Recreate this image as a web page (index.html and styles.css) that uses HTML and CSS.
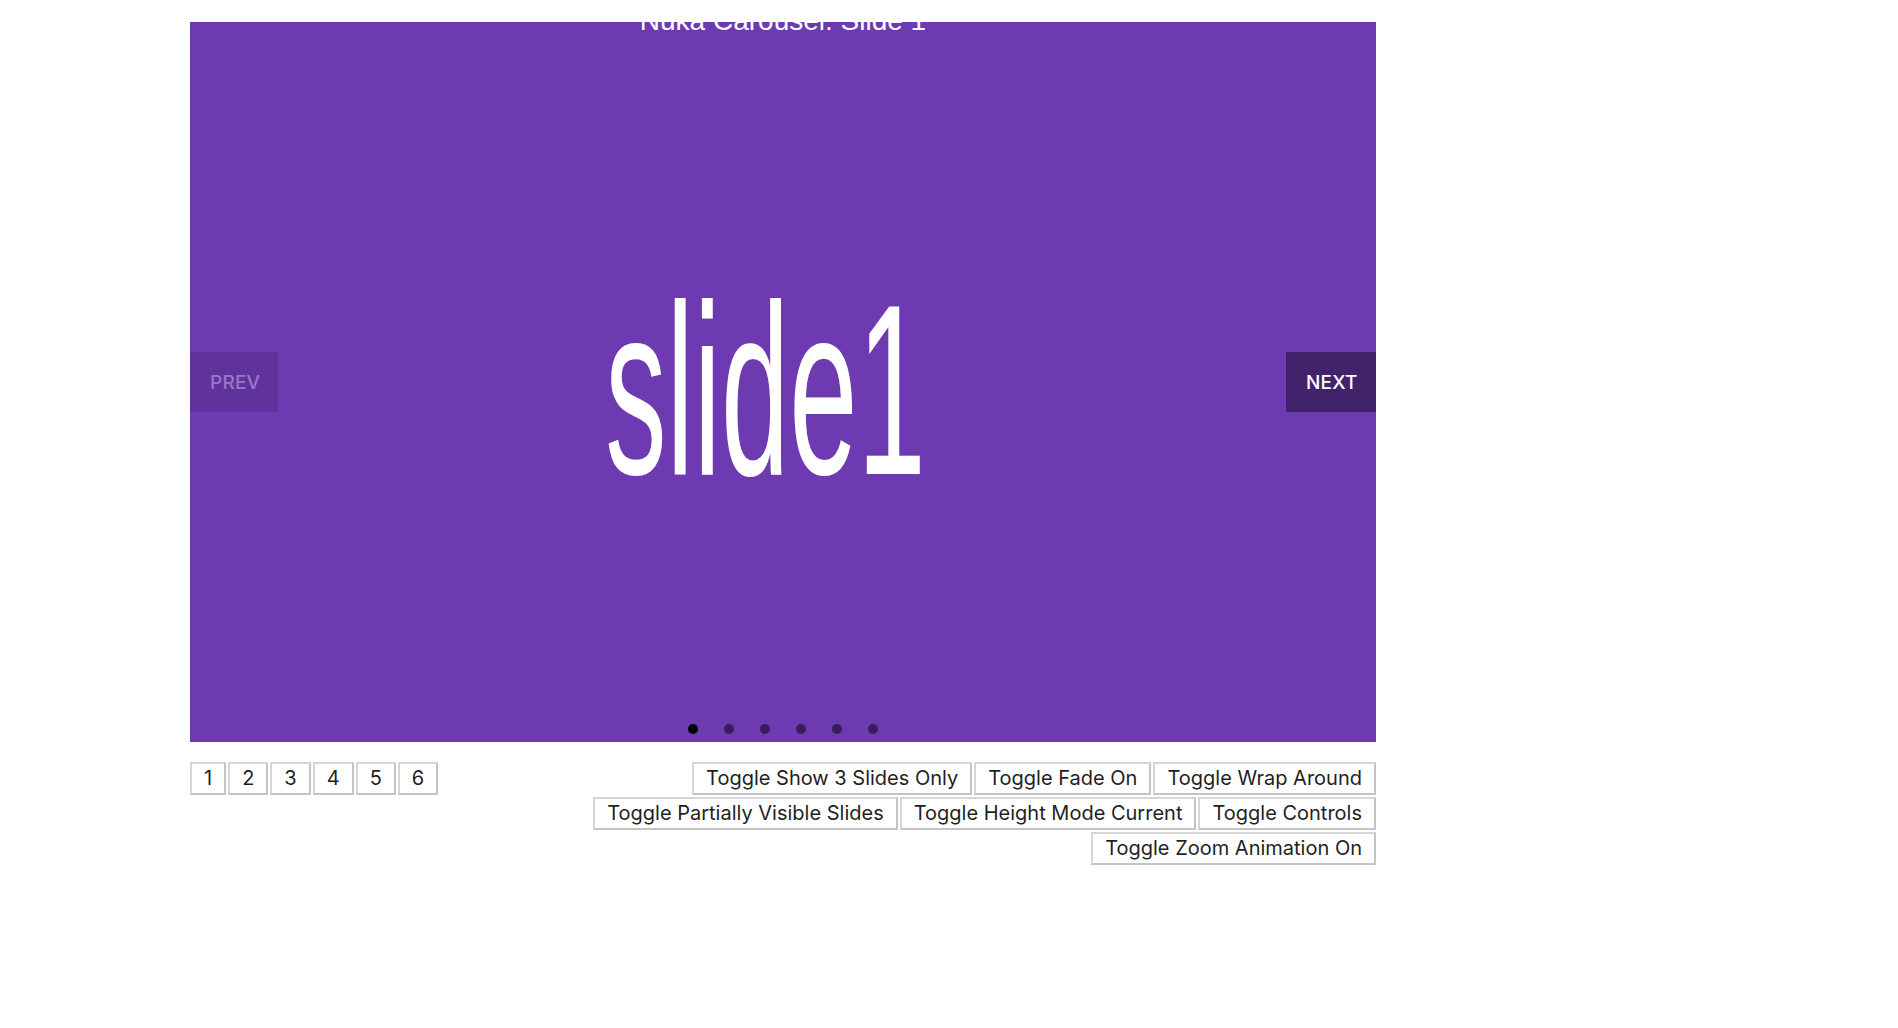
FILE: index.html
```html
<!DOCTYPE html>
<html lang="en">
<head>
<meta charset="utf-8">
<title>Nuka Carousel</title>
<link rel="stylesheet" href="styles.css">
</head>
<body>
<div class="demo">
  <div class="carousel">
    <div class="top-control">Nuka Carousel: Slide 1</div>
    <div class="slide">
      <span class="slide-label">slide1</span>
    </div>
    <button class="nav nav-prev" disabled>PREV</button>
    <button class="nav nav-next">NEXT</button>
    <ul class="dots">
      <li class="dot active"></li>
      <li class="dot"></li>
      <li class="dot"></li>
      <li class="dot"></li>
      <li class="dot"></li>
      <li class="dot"></li>
    </ul>
  </div>
  <div class="controls">
    <div class="nums">
      <button class="btn">1</button>
      <button class="btn">2</button>
      <button class="btn">3</button>
      <button class="btn">4</button>
      <button class="btn">5</button>
      <button class="btn">6</button>
    </div>
    <div class="toggles">
      <button class="btn">Toggle Show 3 Slides Only</button>
      <button class="btn">Toggle Fade On</button>
      <button class="btn">Toggle Wrap Around</button>
      <button class="btn">Toggle Partially Visible Slides</button>
      <button class="btn">Toggle Height Mode Current</button>
      <button class="btn">Toggle Controls</button>
      <button class="btn">Toggle Zoom Animation On</button>
    </div>
  </div>
</div>
</body>
</html>
```
FILE: styles.css
```css
html, body {
  margin: 0;
  padding: 0;
  background: #ffffff;
}

body {
  font-family: Inter, "Noto Sans", sans-serif;
}

.demo {
  width: 1186px;
  margin: 22px 0 0 190px;
}

.carousel {
  position: relative;
  height: 720px;
  background: #6e3ab2;
  overflow: hidden;
}

.top-control {
  position: absolute;
  top: -15px;
  left: 0;
  right: 0;
  text-align: center;
  font-family: "Liberation Sans", Arial, sans-serif;
  font-size: 28px;
  line-height: 28px;
  color: #ffffff;
}

.slide {
  height: 100%;
  display: flex;
  align-items: center;
  justify-content: center;
}

.slide-label {
  font-family: "Liberation Sans", Arial, sans-serif;
  font-size: 243px;
  line-height: 243px;
  color: #ffffff;
  transform: translate(-18px, 7px) scaleX(0.505);
}

.nav {
  position: absolute;
  top: 330px;
  height: 60px;
  padding: 0 20px;
  border: 0;
  font-family: Inter, "Noto Sans", sans-serif;
  font-size: 19px;
  font-weight: 500;
  line-height: 62px;
  letter-spacing: 0.2px;
  color: #ffffff;
  background: rgba(0, 0, 0, 0.4);
  cursor: pointer;
}

.nav-prev {
  left: 0;
  width: 88px;
  opacity: 0.3;
}

.nav-next {
  right: 0;
  width: 90px;
}

.dots {
  position: absolute;
  left: 0;
  right: 0;
  bottom: 8px;
  margin: 0;
  padding: 0;
  list-style: none;
  display: flex;
  justify-content: center;
  gap: 26px;
}

.dot {
  width: 10px;
  height: 10px;
  border-radius: 50%;
  background: #000000;
  opacity: 0.5;
}

.dot.active {
  opacity: 1;
}

.controls {
  display: flex;
  justify-content: space-between;
  align-items: flex-start;
  margin-top: 20px;
}

.nums {
  display: flex;
  gap: 2px;
}

.toggles {
  width: 860px;
  display: flex;
  flex-wrap: wrap;
  justify-content: flex-end;
  column-gap: 2px;
  row-gap: 2px;
}

.btn {
  height: 33px;
  padding: 0 12px;
  font-family: Inter, "Noto Sans", sans-serif;
  font-size: 20px;
  line-height: 29px;
  color: #1f1f1f;
  background: #ffffff;
  border: 2px solid #d6d6d6;
  border-right-color: #c4c4c4;
  border-bottom-color: #c4c4c4;
  border-radius: 0;
  cursor: pointer;
}
```
